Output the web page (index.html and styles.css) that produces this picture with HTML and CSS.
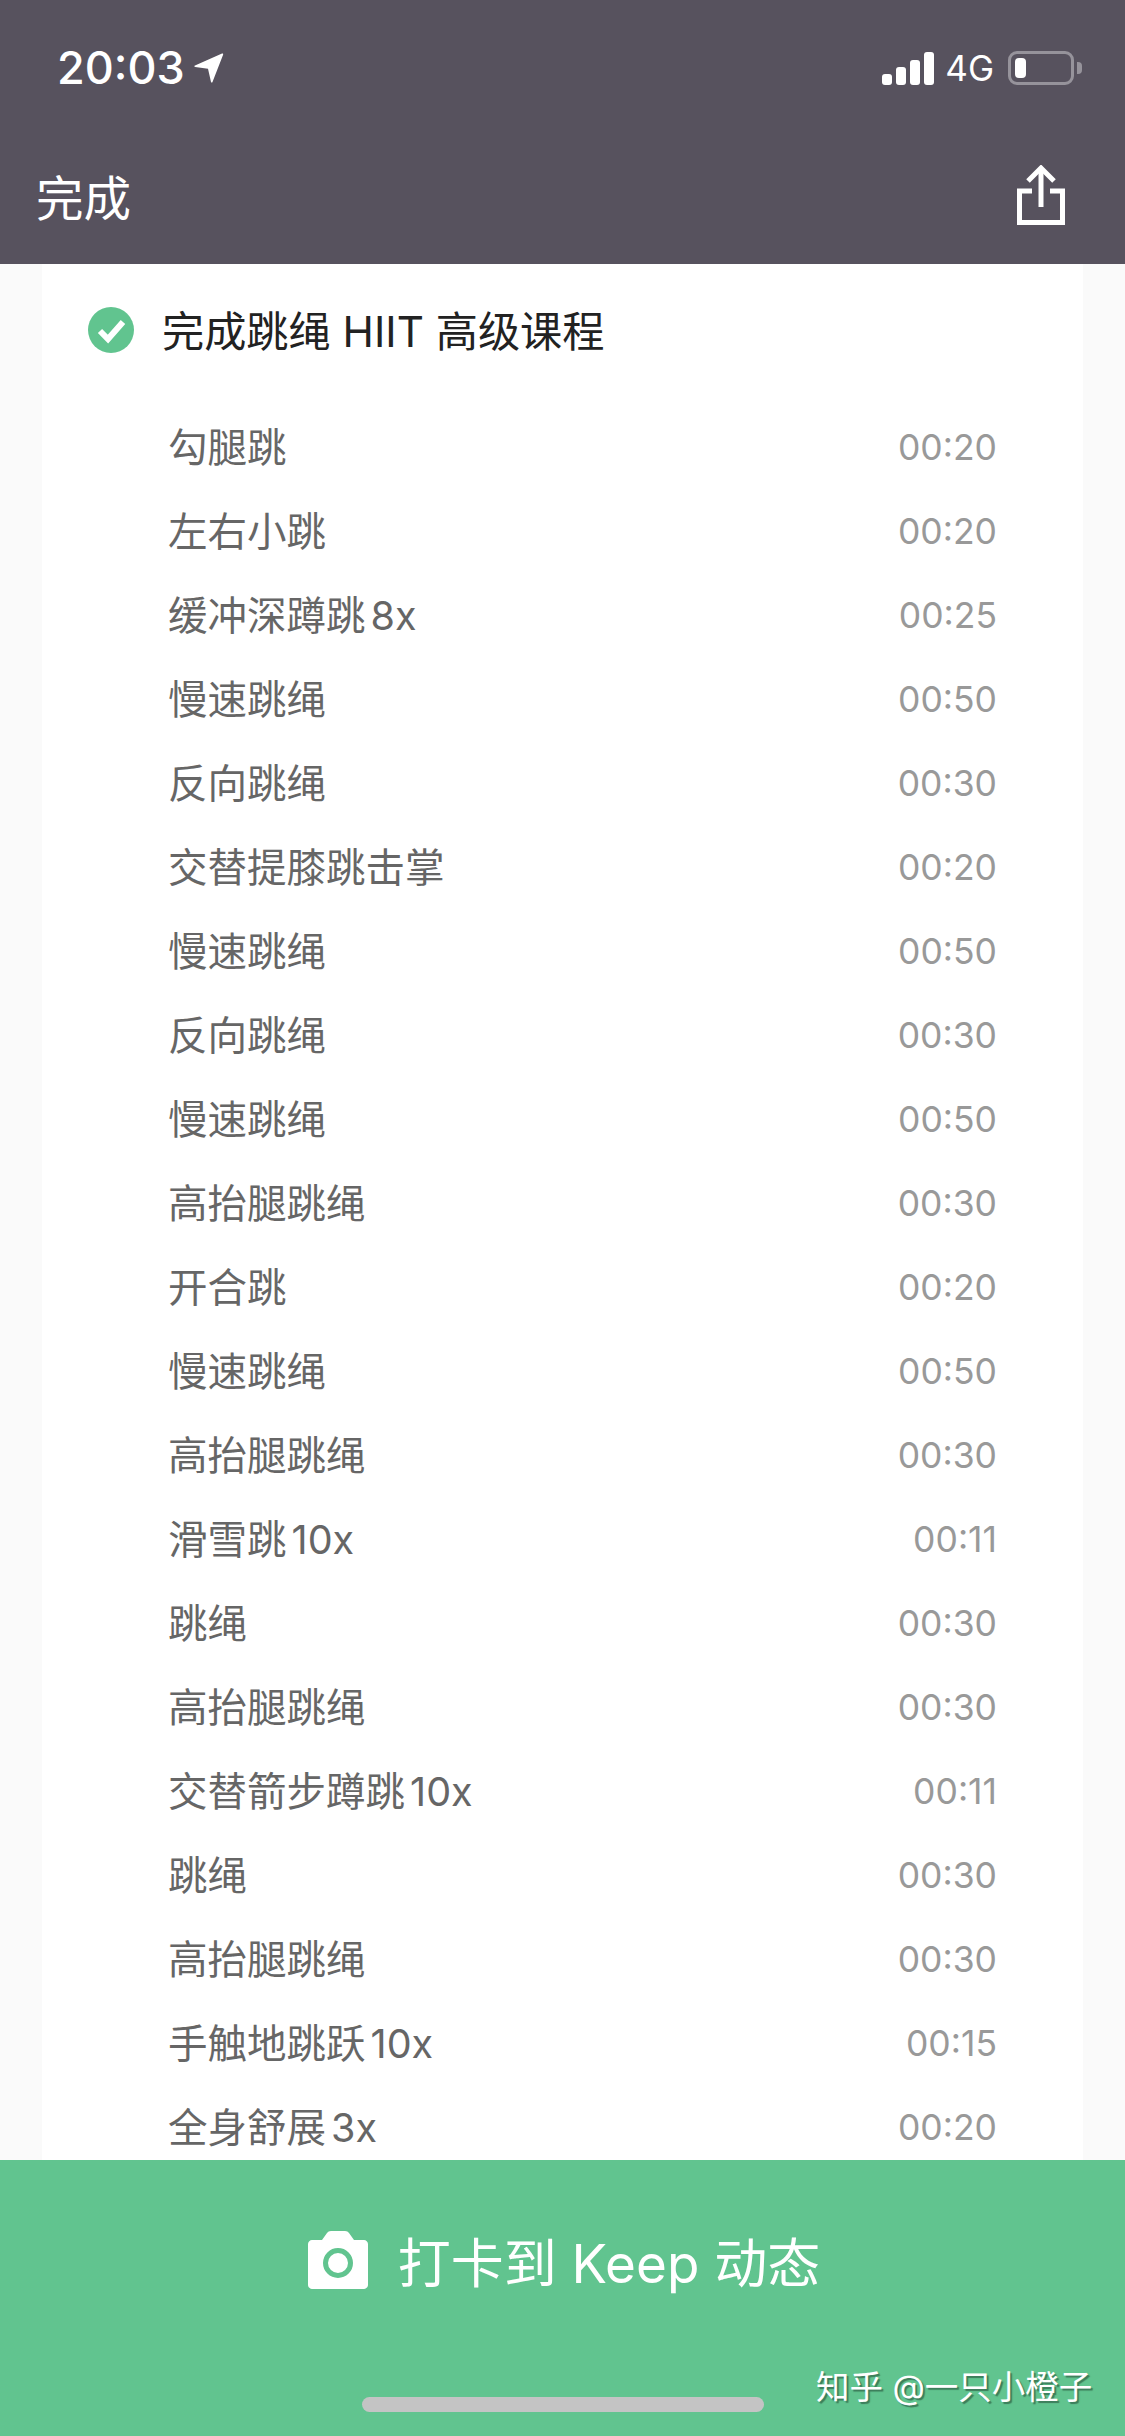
FILE: index.html
```html
<!DOCTYPE html>
<html lang="zh">
<head>
    <meta charset="UTF-8">
    <meta name="viewport" content="width=device-width, initial-scale=1.0">
    <title>完成</title>
    <link rel="stylesheet" href="styles.css">
</head>
<body>
    <div class="app">
        <header class="topbar">
            <div class="status">
                <div class="status-left">
                    <span class="clock">20:03</span>
                    <svg class="arrow" width="30" height="30" viewBox="0 0 30 30"><path d="M1 12.500 28 .6c.8-.3 1.400.3 1.100 1.100L18.500 29c-.3.8-1.300.7-1.500-.1l-3-13.200L1.200 14c-1-.2-1.100-1.100-.2-1.500z" fill="#fff"/></svg>
                </div>
                <div class="status-right">
                    <div class="signal"><i class="s1"></i><i class="s2"></i><i class="s3"></i><i class="s4"></i></div>
                    <span class="net">4G</span>
                    <div class="battery"><div class="battery-level"></div></div>
                    <div class="battery-cap"></div>
                </div>
            </div>
            <div class="nav">
                <span class="nav-title">完成</span>
                <svg class="share" width="48" height="60" viewBox="0 0 48 60" fill="none" stroke="#fff" stroke-width="5"><path d="M15 26H2.500v31.500h43V26H33"/><path d="M24 42V4"/><path d="M11 16 24 3l13 13"/></svg>
            </div>
        </header>
        <main class="content">
            <section class="card">
                <div class="card-head">
                    <svg class="check" width="46" height="46" viewBox="0 0 46 46"><circle cx="23" cy="23" r="23" fill="#61c48f"/><path d="M12 24l8 8 15-17" fill="none" stroke="#fff" stroke-width="6"/></svg>
                    <h1 class="card-title">完成跳绳 HIIT 高级课程</h1>
                </div>
                <ul class="moves">
                    <li class="move"><span class="move-name">勾腿跳</span><span class="time">00:20</span></li>
                    <li class="move"><span class="move-name">左右小跳</span><span class="time">00:20</span></li>
                    <li class="move"><span class="move-name">缓冲深蹲跳 8x</span><span class="time">00:25</span></li>
                    <li class="move"><span class="move-name">慢速跳绳</span><span class="time">00:50</span></li>
                    <li class="move"><span class="move-name">反向跳绳</span><span class="time">00:30</span></li>
                    <li class="move"><span class="move-name">交替提膝跳击掌</span><span class="time">00:20</span></li>
                    <li class="move"><span class="move-name">慢速跳绳</span><span class="time">00:50</span></li>
                    <li class="move"><span class="move-name">反向跳绳</span><span class="time">00:30</span></li>
                    <li class="move"><span class="move-name">慢速跳绳</span><span class="time">00:50</span></li>
                    <li class="move"><span class="move-name">高抬腿跳绳</span><span class="time">00:30</span></li>
                    <li class="move"><span class="move-name">开合跳</span><span class="time">00:20</span></li>
                    <li class="move"><span class="move-name">慢速跳绳</span><span class="time">00:50</span></li>
                    <li class="move"><span class="move-name">高抬腿跳绳</span><span class="time">00:30</span></li>
                    <li class="move"><span class="move-name">滑雪跳 10x</span><span class="time">00:11</span></li>
                    <li class="move"><span class="move-name">跳绳</span><span class="time">00:30</span></li>
                    <li class="move"><span class="move-name">高抬腿跳绳</span><span class="time">00:30</span></li>
                    <li class="move"><span class="move-name">交替箭步蹲跳 10x</span><span class="time">00:11</span></li>
                    <li class="move"><span class="move-name">跳绳</span><span class="time">00:30</span></li>
                    <li class="move"><span class="move-name">高抬腿跳绳</span><span class="time">00:30</span></li>
                    <li class="move"><span class="move-name">手触地跳跃 10x</span><span class="time">00:15</span></li>
                    <li class="move"><span class="move-name">全身舒展 3x</span><span class="time">00:20</span></li>
                </ul>
            </section>
        </main>
        <footer class="checkin">
            <div class="checkin-row">
                <svg class="camera" width="60" height="58" viewBox="0 0 60 58"><path fill-rule="evenodd" fill="#fff" d="M4 9h10l5-7c1-1.300 2-2 4-2h14c2 0 3 .7 4 2l5 7h10c2 0 4 2 4 4v41c0 2-2 4-4 4H4c-2 0-4-2-4-4V13c0-2 2-4 4-4zm26 8a15 15 0 1 0 0 30 15 15 0 0 0 0-30zm0 5a10 10 0 1 1 0 20 10 10 0 0 1 0-20z"/></svg>
                <span class="checkin-text">打卡到 Keep 动态</span>
            </div>
        </footer>
        <div class="home-bar"></div>
        <div class="watermark">知乎 @一只小橙子</div>
    </div>
</body>
</html>
```

FILE: styles.css
```css
* {
    box-sizing: border-box;
}

body {
    margin: 0;
    font-family: Inter, "Noto Sans CJK SC", sans-serif;
}

.app {
    position: relative;
    width: 1125px;
    height: 2436px;
    display: flex;
    flex-direction: column;
    overflow: hidden;
    background: #fafafa;
}

.topbar {
    height: 264px;
    flex-shrink: 0;
    background: #57525e;
    color: #fff;
}

.status {
    height: 136px;
    padding: 43px 43px 0 57px;
    display: flex;
    justify-content: space-between;
    align-items: flex-start;
}

.status-left {
    display: flex;
    align-items: center;
    gap: 9px;
    height: 50px;
}

.clock {
    font-size: 45px;
    font-weight: 500;
    line-height: 50px;
}

.status-right {
    display: flex;
    align-items: center;
    height: 50px;
}

.signal {
    display: flex;
    align-items: flex-end;
    gap: 4px;
    height: 33px;
    margin-right: 11px;
}

.signal i {
    width: 10px;
    border-radius: 3px;
    background: #fff;
}

.s1 { height: 11px; }
.s2 { height: 18px; }
.s3 { height: 25px; }
.s4 { height: 33px; }

.net {
    font-size: 35px;
    line-height: 50px;
    margin-right: 14px;
}

.battery {
    width: 66px;
    height: 34px;
    padding: 4px;
    border: 3px solid #96939b;
    border-radius: 9px;
}

.battery-level {
    width: 11px;
    height: 20px;
    border-radius: 4px;
    background: #fff;
}

.battery-cap {
    width: 5px;
    height: 12px;
    margin-left: 3px;
    border-radius: 0 4px 4px 0;
    background: #96939b;
}

.nav {
    height: 128px;
    padding: 0 60px 10px 36px;
    display: flex;
    justify-content: space-between;
    align-items: center;
}

.nav-title {
    font-size: 47.500px;
}

.content {
    flex: 1;
    min-height: 0;
    overflow: hidden;
    padding: 0 42px;
}

.card {
    background: #fff;
    height: 100%;
}

.card-head {
    display: flex;
    align-items: center;
    height: 132px;
    padding-left: 46px;
    gap: 28px;
}

.card-title {
    margin: 0 0 3px;
    font-size: 42.200px;
    font-weight: 400;
    color: #222;
}

.moves {
    list-style: none;
    margin: 0;
    padding: 9px 86px 0 126px;
}

.move {
    height: 84px;
    display: flex;
    justify-content: space-between;
    align-items: center;
    font-size: 39.5px;
    color: #666;
}

.move-name {
    margin-bottom: 6px;
    word-spacing: -6px;
}

.time {
    font-size: 35.500px;
    color: #999;
}

.checkin {
    height: 276px;
    flex-shrink: 0;
    padding: 0 0 76px 3px;
    background: #61c48f;
    display: flex;
    justify-content: center;
    align-items: center;
}

.checkin-row {
    display: flex;
    align-items: center;
    gap: 30px;
}

.checkin-text {
    font-size: 53px;
    color: #fff;
}

.home-bar {
    position: absolute;
    left: 362px;
    top: 2397px;
    width: 402px;
    height: 15px;
    border-radius: 8px;
    background: #c4c4c4;
}

.watermark {
    position: absolute;
    left: 816px;
    top: 2365px;
    font-size: 33.500px;
    line-height: 44px;
    color: #fff;
    text-shadow: 2px 2px 1px #3c7d5a;
    white-space: nowrap;
}
```
